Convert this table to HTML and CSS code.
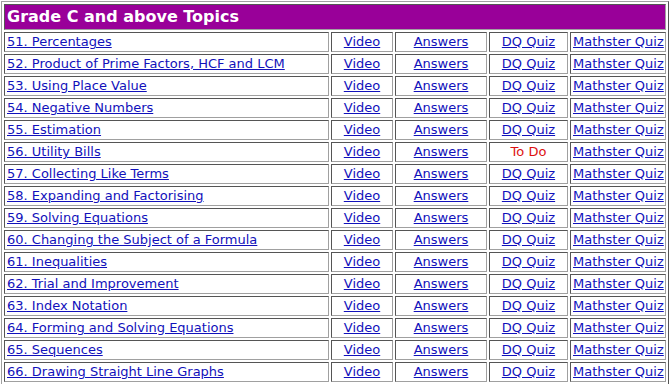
FILE: index.html
```html
<!DOCTYPE html>
<html>
<head>
<meta charset="utf-8">
<link rel="stylesheet" href="styles.css">
</head>
<body>
<table class="topics">
<colgroup>
<col class="c-topic"><col class="c-video"><col class="c-ans"><col class="c-dq"><col class="c-math">
</colgroup>
<tr><th class="head" colspan="5">Grade C and above Topics</th></tr>
<tr><td class="topic"><a href="#">51. Percentages</a></td><td><a href="#">Video</a></td><td><a href="#">Answers</a></td><td><a href="#">DQ Quiz</a></td><td><a href="#">Mathster Quiz</a></td></tr>
<tr><td class="topic"><a href="#">52. Product of Prime Factors, HCF and LCM</a></td><td><a href="#">Video</a></td><td><a href="#">Answers</a></td><td><a href="#">DQ Quiz</a></td><td><a href="#">Mathster Quiz</a></td></tr>
<tr><td class="topic"><a href="#">53. Using Place Value</a></td><td><a href="#">Video</a></td><td><a href="#">Answers</a></td><td><a href="#">DQ Quiz</a></td><td><a href="#">Mathster Quiz</a></td></tr>
<tr><td class="topic"><a href="#">54. Negative Numbers</a></td><td><a href="#">Video</a></td><td><a href="#">Answers</a></td><td><a href="#">DQ Quiz</a></td><td><a href="#">Mathster Quiz</a></td></tr>
<tr><td class="topic"><a href="#">55. Estimation</a></td><td><a href="#">Video</a></td><td><a href="#">Answers</a></td><td><a href="#">DQ Quiz</a></td><td><a href="#">Mathster Quiz</a></td></tr>
<tr><td class="topic"><a href="#">56. Utility Bills</a></td><td><a href="#">Video</a></td><td><a href="#">Answers</a></td><td><span class="todo">To Do</span></td><td><a href="#">Mathster Quiz</a></td></tr>
<tr><td class="topic"><a href="#">57. Collecting Like Terms</a></td><td><a href="#">Video</a></td><td><a href="#">Answers</a></td><td><a href="#">DQ Quiz</a></td><td><a href="#">Mathster Quiz</a></td></tr>
<tr><td class="topic"><a href="#">58. Expanding and Factorising</a></td><td><a href="#">Video</a></td><td><a href="#">Answers</a></td><td><a href="#">DQ Quiz</a></td><td><a href="#">Mathster Quiz</a></td></tr>
<tr><td class="topic"><a href="#">59. Solving Equations</a></td><td><a href="#">Video</a></td><td><a href="#">Answers</a></td><td><a href="#">DQ Quiz</a></td><td><a href="#">Mathster Quiz</a></td></tr>
<tr><td class="topic"><a href="#">60. Changing the Subject of a Formula</a></td><td><a href="#">Video</a></td><td><a href="#">Answers</a></td><td><a href="#">DQ Quiz</a></td><td><a href="#">Mathster Quiz</a></td></tr>
<tr><td class="topic"><a href="#">61. Inequalities</a></td><td><a href="#">Video</a></td><td><a href="#">Answers</a></td><td><a href="#">DQ Quiz</a></td><td><a href="#">Mathster Quiz</a></td></tr>
<tr><td class="topic"><a href="#">62. Trial and Improvement</a></td><td><a href="#">Video</a></td><td><a href="#">Answers</a></td><td><a href="#">DQ Quiz</a></td><td><a href="#">Mathster Quiz</a></td></tr>
<tr><td class="topic"><a href="#">63. Index Notation</a></td><td><a href="#">Video</a></td><td><a href="#">Answers</a></td><td><a href="#">DQ Quiz</a></td><td><a href="#">Mathster Quiz</a></td></tr>
<tr><td class="topic"><a href="#">64. Forming and Solving Equations</a></td><td><a href="#">Video</a></td><td><a href="#">Answers</a></td><td><a href="#">DQ Quiz</a></td><td><a href="#">Mathster Quiz</a></td></tr>
<tr><td class="topic"><a href="#">65. Sequences</a></td><td><a href="#">Video</a></td><td><a href="#">Answers</a></td><td><a href="#">DQ Quiz</a></td><td><a href="#">Mathster Quiz</a></td></tr>
<tr><td class="topic"><a href="#">66. Drawing Straight Line Graphs</a></td><td><a href="#">Video</a></td><td><a href="#">Answers</a></td><td><a href="#">DQ Quiz</a></td><td><a href="#">Mathster Quiz</a></td></tr>
</table>
</body>
</html>
```
FILE: styles.css
```css
html, body {
  margin: 0;
  padding: 0;
  background: #ffffff;
}
body {
  padding: 1px 0 0 1px;
  font-family: "DejaVu Sans", Verdana, sans-serif;
  font-size: 13px;
}
.topics {
  width: 668px;
  table-layout: fixed;
  border-collapse: separate;
  border-spacing: 2px;
  border-style: solid;
  border-width: 1px 1px 0 1px;
  border-color: #a0a0a0 #555555 #555555 #a0a0a0;
}
.c-topic { width: 325px; }
.c-video { width: 62px; }
.c-ans { width: 92px; }
.c-dq { width: 79px; }
.c-math { width: 96px; }
.topics td, .topics th {
  border: 1px solid;
  border-color: #555555 #a0a0a0 #a0a0a0 #555555;
  padding: 1px 2px;
  line-height: 16px;
  text-align: center;
  white-space: nowrap;
  overflow: hidden;
}
.topics td.topic {
  text-align: left;
}
.topics th.head {
  background: #990099;
  color: #ffffff;
  text-align: left;
  font-size: 16px;
  font-weight: bold;
  line-height: 22px;
}
.topics a {
  color: #1111bb;
  text-decoration: underline;
}
.todo {
  color: #dd1111;
}
```
